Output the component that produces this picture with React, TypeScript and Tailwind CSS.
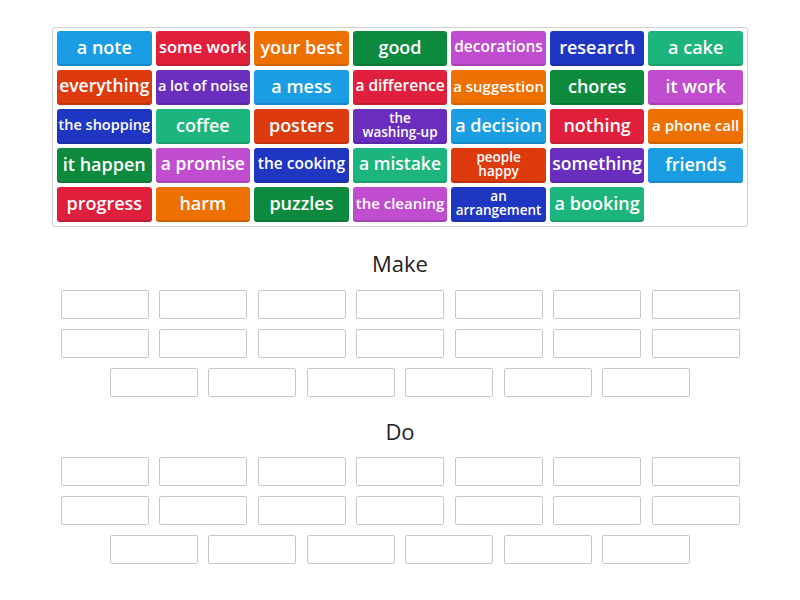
import React from 'react';

type Tile = { text: string; size: number; two?: boolean };

const palette = [
  'bg-[#1a9de2]', // light blue
  'bg-[#e01f3d]', // red
  'bg-[#ee7000]', // orange
  'bg-[#0e8a3e]', // green
  'bg-[#c04dd0]', // pink purple
  'bg-[#1f36c2]', // dark blue
  'bg-[#1cb57d]', // teal
  'bg-[#dd3a0e]', // orange red
  'bg-[#6a2ebf]', // purple
];

const tiles: Tile[] = [
  { text: 'a note', size: 18 },
  { text: 'some work', size: 16.5 },
  { text: 'your best', size: 18 },
  { text: 'good', size: 18 },
  { text: 'decorations', size: 15.5 },
  { text: 'research', size: 18 },
  { text: 'a cake', size: 18 },
  { text: 'everything', size: 17.5 },
  { text: 'a lot of noise', size: 14.5 },
  { text: 'a mess', size: 18 },
  { text: 'a difference', size: 15.5 },
  { text: 'a suggestion', size: 15 },
  { text: 'chores', size: 18 },
  { text: 'it work', size: 18 },
  { text: 'the shopping', size: 14.5 },
  { text: 'coffee', size: 18 },
  { text: 'posters', size: 18 },
  { text: 'the washing-up', size: 13.5, two: true },
  { text: 'a decision', size: 18 },
  { text: 'nothing', size: 18 },
  { text: 'a phone call', size: 15 },
  { text: 'it happen', size: 18 },
  { text: 'a promise', size: 17.5 },
  { text: 'the cooking', size: 15.5 },
  { text: 'a mistake', size: 17.5 },
  { text: 'people happy', size: 13.5, two: true },
  { text: 'something', size: 17.5 },
  { text: 'friends', size: 18 },
  { text: 'progress', size: 18 },
  { text: 'harm', size: 18 },
  { text: 'puzzles', size: 18 },
  { text: 'the cleaning', size: 15 },
  { text: 'an arrangement', size: 13.5, two: true },
  { text: 'a booking', size: 18 },
];

function Slots() {
  return (
    <div className="mx-auto flex w-[680px] flex-wrap justify-center gap-x-[10.5px] gap-y-[10px]">
      {Array.from({ length: 20 }).map((_, i) => (
        <div key={i} className="h-[29px] w-[88px] rounded-[2px] border border-[#c8c8c8] bg-white" />
      ))}
    </div>
  );
}

export default function App() {
  return (
    <div className="min-h-screen w-[800px] bg-white pt-[27px] font-['Open_Sans',sans-serif]">
      <div className="mx-auto w-[696px] rounded-[3px] border border-[#cfcfcf] px-[4px] pb-[4px] pt-[3px]">
        <div className="grid grid-cols-7 gap-[4px]">
          {tiles.map((t, i) => (
            <div
              key={t.text}
              className={`flex h-[35px] flex-col items-center justify-center rounded-[3px] pb-[3px] text-center font-semibold text-white shadow-[inset_0_-2px_0_rgba(0,0,0,0.12)] ${palette[i % 9]}`}
              style={{ fontSize: t.size }}
            >
              {t.two ? (
                <>
                  <div className="h-[14px] leading-[14px]">{t.text.split(' ')[0]}</div>
                  <div className="h-[14px] leading-[14px]">{t.text.split(' ').slice(1).join(' ')}</div>
                </>
              ) : (
                <div className="whitespace-nowrap leading-none">{t.text}</div>
              )}
            </div>
          ))}
        </div>
      </div>

      <h2 className="mt-[21px] mb-[12px] text-center text-[22px] leading-[30px] text-[#222]">Make</h2>
      <Slots />

      <h2 className="mt-[19px] mb-[11px] text-center text-[22px] leading-[30px] text-[#222]">Do</h2>
      <Slots />
    </div>
  );
}
